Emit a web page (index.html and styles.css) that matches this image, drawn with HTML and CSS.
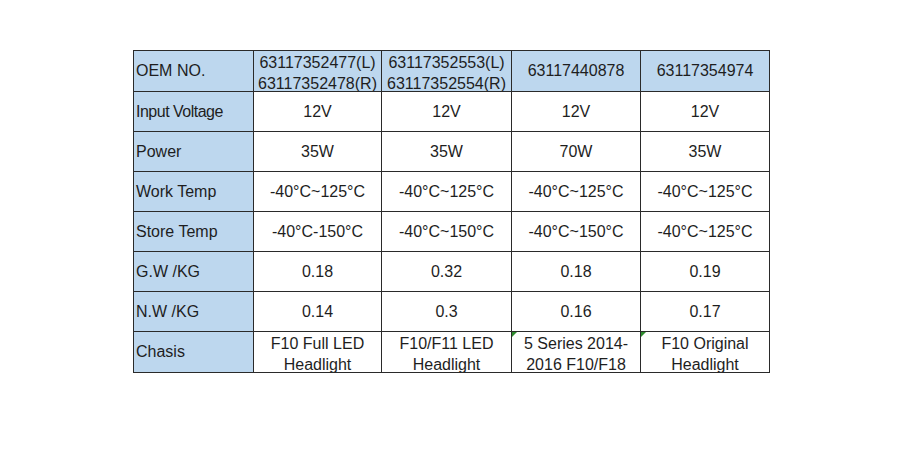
FILE: index.html
```html
<!DOCTYPE html>
<html>
<head>
<meta charset="utf-8">
<link rel="stylesheet" href="styles.css">
</head>
<body>
<div class="page">
<table class="spec">
  <colgroup>
    <col class="c1"><col class="c2"><col class="c3"><col class="c4"><col class="c5">
  </colgroup>
  <tr class="head">
    <td class="label">OEM NO.</td>
    <td class="head-cell"><div class="two">63117352477(L)<br>63117352478(R)</div></td>
    <td class="head-cell"><div class="two">63117352553(L)<br>63117352554(R)</div></td>
    <td class="head-cell">63117440878</td>
    <td class="head-cell">63117354974</td>
  </tr>
  <tr>
    <td class="label tight">Input Voltage</td>
    <td>12V</td><td>12V</td><td>12V</td><td>12V</td>
  </tr>
  <tr>
    <td class="label">Power</td>
    <td>35W</td><td>35W</td><td>70W</td><td>35W</td>
  </tr>
  <tr>
    <td class="label">Work Temp</td>
    <td>-40°C~125°C</td><td>-40°C~125°C</td><td>-40°C~125°C</td><td>-40°C~125°C</td>
  </tr>
  <tr>
    <td class="label">Store Temp</td>
    <td>-40°C-150°C</td><td>-40°C~150°C</td><td>-40°C~150°C</td><td>-40°C~125°C</td>
  </tr>
  <tr>
    <td class="label">G.W /KG</td>
    <td>0.18</td><td>0.32</td><td>0.18</td><td>0.19</td>
  </tr>
  <tr>
    <td class="label">N.W /KG</td>
    <td>0.14</td><td>0.3</td><td>0.16</td><td>0.17</td>
  </tr>
  <tr class="last">
    <td class="label">Chasis</td>
    <td><div class="two">F10 Full LED<br>Headlight</div></td>
    <td><div class="two">F10/F11 LED<br>Headlight</div></td>
    <td class="flag"><div class="two">5 Series 2014-<br>2016 F10/F18</div></td>
    <td class="flag"><div class="two">F10 Original<br>Headlight</div></td>
  </tr>
</table>
</div>
</body>
</html>
```

FILE: styles.css
```css
html, body {
  margin: 0;
  padding: 0;
  background: #ffffff;
}

.page {
  padding: 50px 0 0 133px;
}

.spec {
  border-collapse: collapse;
  table-layout: fixed;
  width: 636px;
  font-family: "Liberation Sans", Arial, sans-serif;
  font-size: 16px;
  line-height: 20px;
  color: #1e1e1e;
}

.c1 { width: 120px; }
.c2 { width: 128px; }
.c3 { width: 130px; }
.c4 { width: 129px; }
.c5 { width: 129px; }

.spec td {
  border: 1px solid #2a2a2a;
  height: 39px;
  padding: 0;
  text-align: center;
  vertical-align: middle;
  white-space: nowrap;
  overflow: hidden;
}

.spec tr.head td,
.spec tr.last td {
  height: 40px;
}

.spec td.label {
  background: #bdd7ee;
  text-align: left;
  padding-left: 2px;
}

.spec td.head-cell {
  background: #bdd7ee;
}

.spec td.tight {
  letter-spacing: -0.5px;
}

.two {
  height: 39px;
  padding-top: 1px;
  line-height: 21px;
  overflow: visible;
}

.spec td.flag {
  position: relative;
}

.spec td.flag::before {
  content: "";
  position: absolute;
  left: 0;
  top: 0;
  width: 0;
  height: 0;
  border-top: 5px solid #2e8b2e;
  border-right: 5px solid transparent;
}
```
